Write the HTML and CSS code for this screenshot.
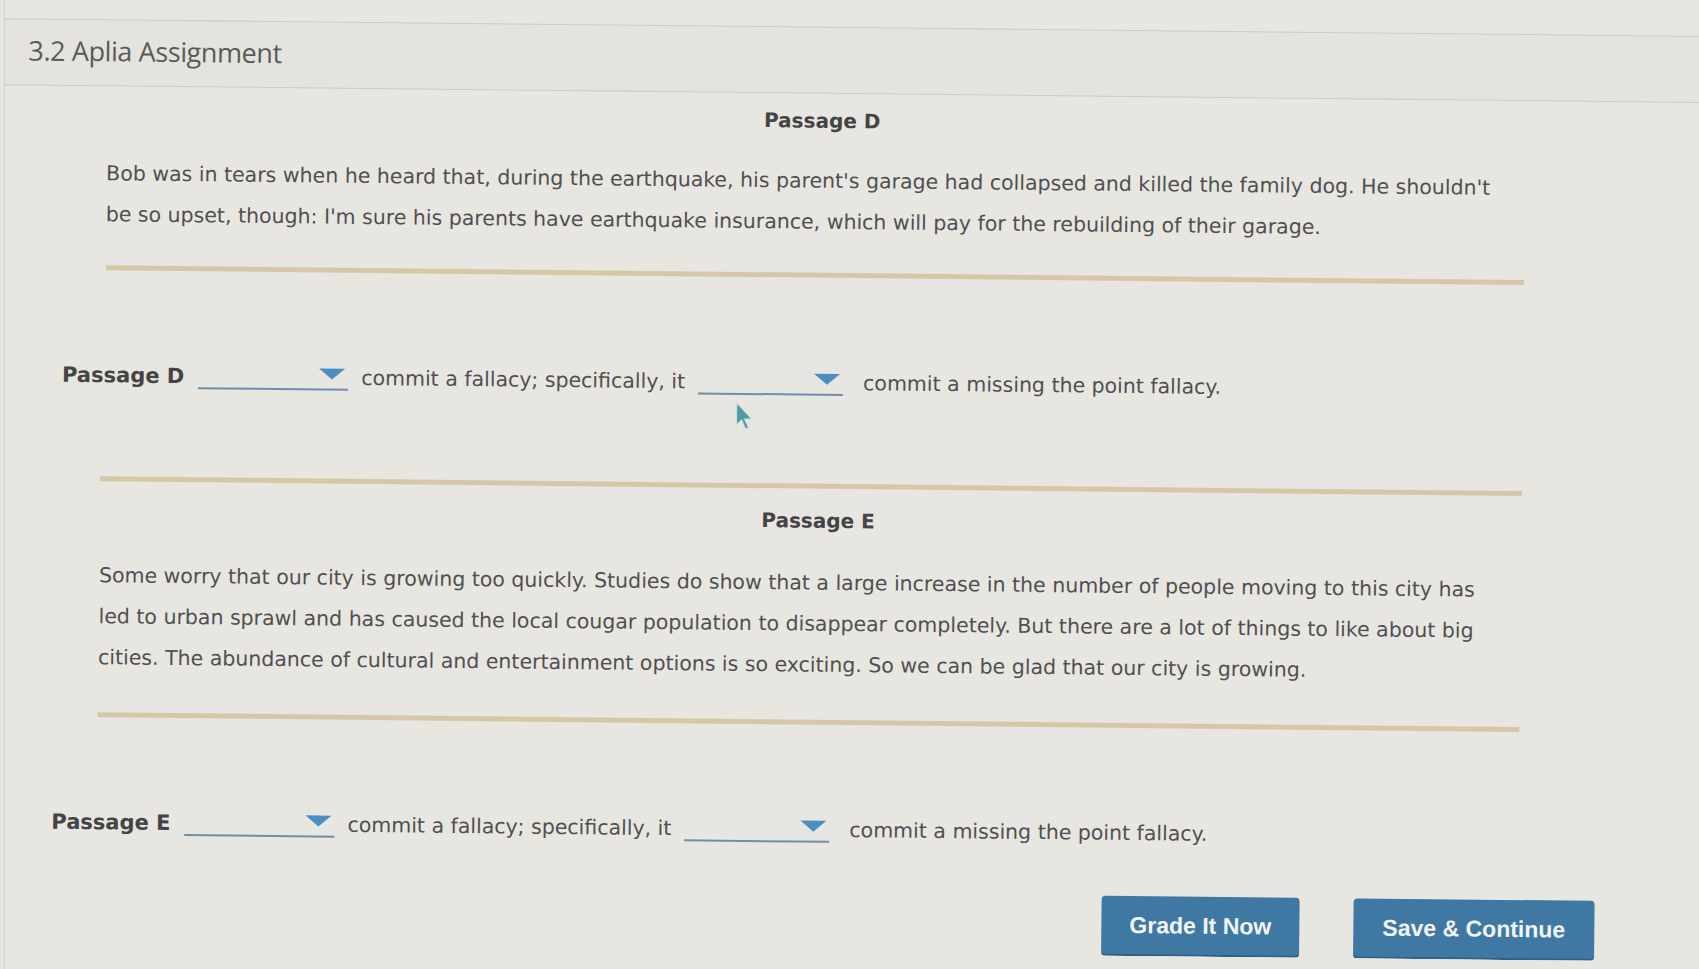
FILE: index.html
```html
<!DOCTYPE html>
<html lang="en">
<head>
<meta charset="utf-8">
<title>3.2 Aplia Assignment</title>
<link rel="stylesheet" href="styles.css">
</head>
<body>
<div class="page">
  <header class="header">
    <h1 class="title">3.2 Aplia Assignment</h1>
  </header>

  <main class="content">
    <section class="passage passage-d">
      <h2 class="passage-title">Passage D</h2>
      <p class="passage-text">Bob was in tears when he heard that, during the earthquake, his parent's garage had collapsed and killed the family dog. He shouldn't<br>be so upset, though: I'm sure his parents have earthquake insurance, which will pay for the rebuilding of their garage.</p>
      <hr class="rule">
    </section>

    <div class="question q-d">
      <span class="q-label">Passage D</span>
      <span class="select"><span class="arrow"></span></span>
      <span class="q-text">commit a fallacy; specifically, it</span>
      <span class="select select-2"><span class="arrow"></span></span>
      <span class="q-text">commit a missing the point fallacy.</span>
      <svg class="cursor" width="20" height="30" viewBox="0 0 20 30"><path d="M2 1 L2 23 L7 18 L11 27 L14 26 L10 17 L17 17 Z" fill="#4f9aa3" stroke="#d3e3e3" stroke-width="1"/></svg>
    </div>

    <section class="passage passage-e">
      <hr class="rule rule-top">
      <h2 class="passage-title">Passage E</h2>
      <p class="passage-text">Some worry that our city is growing too quickly. Studies do show that a large increase in the number of people moving to this city has<br>led to urban sprawl and has caused the local cougar population to disappear completely. But there are a lot of things to like about big<br>cities. The abundance of cultural and entertainment options is so exciting. So we can be glad that our city is growing.</p>
      <hr class="rule">
    </section>

    <div class="question q-e">
      <span class="q-label">Passage E</span>
      <span class="select"><span class="arrow"></span></span>
      <span class="q-text">commit a fallacy; specifically, it</span>
      <span class="select select-2"><span class="arrow"></span></span>
      <span class="q-text">commit a missing the point fallacy.</span>
    </div>

    <div class="actions">
      <button class="btn">Grade It Now</button>
      <button class="btn btn-save">Save &amp; Continue</button>
    </div>
  </main>
</div>
</body>
</html>
```

FILE: styles.css
```css
html {
  background: #e7e5e0;
}

body {
  margin: 0 0 0 4px;
  padding: 0;
  height: 969px;
  overflow: hidden;
  background: #e8e6e1;
  border-left: 1px solid #d5d3ce;
}

.page {
  padding-top: 27px;
  font-family: "DejaVu Sans", Verdana, sans-serif;
  color: #4d4d4d;
  transform: rotate(0.6deg);
  transform-origin: 846px 480px;
  margin-left: -5px;
}

.header {
  border-top: 1px solid #cdcbc6;
  border-bottom: 1px solid #cdcbc6;
  height: 67px;
  box-sizing: border-box;
  padding: 13px 0 0 24px;
  background: #e5e3de;
}

.title {
  margin: 0;
  font-family: "Open Sans", "Liberation Sans", sans-serif;
  font-weight: 400;
  font-size: 27px;
  line-height: 36px;
  color: #5a5a5a;
  letter-spacing: -0.4px;
}

.passage {
  margin: 0 177px 0 100px;
}

.passage-title {
  margin: 0;
  text-align: center;
  font-size: 20px;
  font-weight: 700;
  line-height: 28px;
  color: #444;
  padding-left: 15px;
}

.passage-text {
  margin: 0;
  font-size: 20.5px;
  line-height: 41px;
  color: #505050;
  white-space: nowrap;
}

.passage-d .passage-title {
  margin-top: 13px;
}

.passage-d .passage-text {
  margin-top: 26px;
  padding-left: 3px;
}

.rule {
  border: 0;
  height: 5px;
  background: #d6c8a7;
  margin: 0;
}

.passage-d .rule {
  margin-top: 30px;
  margin-left: 4px;
}

.passage-e .rule-top {
  margin-top: 86px;
}

.passage-e .passage-title {
  margin-top: 18px;
}

.passage-e .passage-text {
  margin-top: 28px;
}

.passage-e .passage-text + .rule {
  margin-top: 34px;
}

.question {
  position: relative;
  display: flex;
  align-items: flex-start;
  height: 30px;
  padding-left: 61px;
  font-size: 20.5px;
}

.q-d {
  margin-top: 90px;
}

.q-e {
  margin-top: 90px;
  padding-left: 55px;
}

.q-label {
  font-weight: 700;
  font-size: 21px;
  color: #444;
  line-height: 30px;
}

.q-text {
  line-height: 30px;
  color: #505050;
}

.select {
  position: relative;
  width: 150px;
  height: 28px;
  box-sizing: border-box;
  margin: 0 13px 0 14px;
  border-bottom: 2px solid #6f8eaa;
}

.select-2 {
  width: 145px;
  margin: 0 20px 0 13px;
}

.arrow {
  position: absolute;
  right: 3px;
  top: 6px;
  width: 0;
  height: 0;
  border-left: 13px solid transparent;
  border-right: 13px solid transparent;
  border-top: 11px solid #4b8ec2;
}

.cursor {
  position: absolute;
  left: 734px;
  top: 35px;
}

.actions {
  display: flex;
  justify-content: flex-end;
  gap: 54px;
  margin-top: 48px;
  padding-right: 100px;
}

.btn {
  font-family: "Liberation Sans", Arial, sans-serif;
  font-weight: 700;
  font-size: 23px;
  color: #f2f5f7;
  background: #3f79a3;
  border: 0;
  border-bottom: 2px solid #2f6186;
  border-radius: 4px;
  height: 60px;
  width: 198px;
  padding: 0;
}

.btn-save {
  width: 241px;
}
```
